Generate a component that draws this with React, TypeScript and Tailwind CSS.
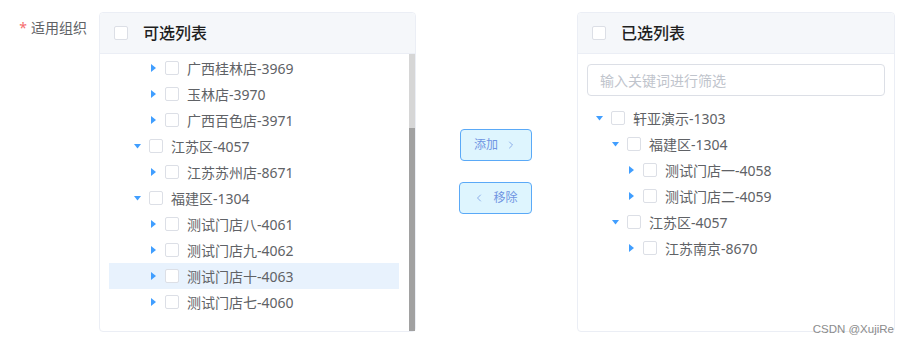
import React from "react";
import { ChevronLeft, ChevronRight } from "lucide-react";

type Node = { label: string; level: number; open?: boolean; active?: boolean };

// only the part of the left tree that is scrolled into view
const leftNodes: Node[] = [
    { label: "广西桂林店-3969", level: 2 },
    { label: "玉林店-3970", level: 2 },
    { label: "广西百色店-3971", level: 2 },
    { label: "江苏区-4057", level: 1, open: true },
    { label: "江苏苏州店-8671", level: 2 },
    { label: "福建区-1304", level: 1, open: true },
    { label: "测试门店八-4061", level: 2 },
    { label: "测试门店九-4062", level: 2 },
    { label: "测试门店十-4063", level: 2, active: true },
    { label: "测试门店七-4060", level: 2 },
];

const rightNodes: Node[] = [
    { label: "轩亚演示-1303", level: 0, open: true },
    { label: "福建区-1304", level: 1, open: true },
    { label: "测试门店一-4058", level: 2 },
    { label: "测试门店二-4059", level: 2 },
    { label: "江苏区-4057", level: 1, open: true },
    { label: "江苏南京-8670", level: 2 },
];

const font = { fontFamily: '"Noto Sans", "Noto Sans CJK SC", sans-serif' };

function Checkbox() {
    return <span className="inline-block w-[14px] h-[14px] shrink-0 rounded-[2px] border border-[#dcdfe6] bg-white" />;
}

function Caret({ open }: { open?: boolean }) {
    return open ? (
        <svg width="7" height="5" viewBox="0 0 7 5">
            <polygon points="0,0 7,0 3.5,4.5" fill="#409eff" />
        </svg>
    ) : (
        <svg width="5" height="8" viewBox="0 0 5 8">
            <polygon points="0,0 5,4 0,8" fill="#409eff" />
        </svg>
    );
}

function TreeRow({ node }: { node: Node }) {
    const pad = node.level === 0 ? "pl-0" : node.level === 1 ? "pl-4" : "pl-8";
    return (
        <div className={`h-[26px] flex items-center ${pad} ${node.active ? "bg-[#e8f2fd]" : ""}`}>
            <span className="w-6 h-[26px] flex items-center justify-center shrink-0">
                <Caret open={node.open} />
            </span>
            <Checkbox />
            <span className="ml-2 text-[14px] text-[#606266] whitespace-nowrap">{node.label}</span>
        </div>
    );
}

function PanelHeader({ title }: { title: string }) {
    return (
        <div className="h-[41px] bg-[#f5f7fa] border-b border-[#ebeef5] flex items-center pl-[14px] rounded-t">
            <Checkbox />
            <span className="ml-[15px] text-[16px] font-medium text-[#1f1f1f]">{title}</span>
        </div>
    );
}

export default function App() {
    return (
        <div className="relative w-[909px] h-[345px] bg-white" style={font}>
            <div className="flex pt-3">
                <div className="w-[99px] pr-3 text-right text-[14px] leading-8 text-[#606266]">
                    <span className="text-[#f56c6c] mr-1">*</span>适用组织
                </div>

                <div className="w-[317px] h-[320px] border border-[#ebeef5] rounded flex flex-col">
                    <PanelHeader title="可选列表" />
                    <div className="relative flex-1 overflow-hidden">
                        <div className="pl-[9px] pr-[16px] pt-[1px]">
                            {leftNodes.map((n) => (
                                <TreeRow key={n.label} node={n} />
                            ))}
                        </div>
                        {/* scrollbar */}
                        <div className="absolute right-0 top-0 bottom-0 w-[6px] bg-[#d6d6d6]">
                            <div className="absolute left-0 right-0 top-[74px] bottom-0 bg-[#a1a1a1]" />
                        </div>
                    </div>
                </div>

                <div className="w-[161px] h-[320px] pb-[2px] flex flex-col items-center justify-center gap-[21px] text-[12px]">
                    <button className="w-[72px] h-8 rounded border border-[#5aa9f7] bg-[#def5fe] text-[#6f94e2] flex items-center justify-center gap-[7px] ml-[-2px]">
                        添加
                        <ChevronRight className="w-3 h-3" strokeWidth={1.5} />
                    </button>
                    <button className="w-[73px] h-8 rounded border border-[#5aa9f7] bg-[#def5fe] text-[#6f94e2] flex items-center justify-center gap-[8px] ml-[-2px]">
                        <ChevronLeft className="w-3 h-3" strokeWidth={1.5} />
                        移除
                    </button>
                </div>

                <div className="w-[318px] h-[320px] border border-[#ebeef5] rounded flex flex-col">
                    <PanelHeader title="已选列表" />
                    <div className="px-[9px] pt-[10px]">
                        <div className="h-8 rounded border border-[#dcdfe6] flex items-center pl-3 text-[14px] text-[#c0c4cc]">
                            输入关键词进行筛选
                        </div>
                        <div className="mt-[9px]">
                            {rightNodes.map((n) => (
                                <TreeRow key={n.label} node={n} />
                            ))}
                        </div>
                    </div>
                </div>
            </div>

            <span
                className="absolute right-[15px] top-[321px] text-[11.5px] text-[#8c8c8c]"
                style={{ fontFamily: '"Liberation Sans", Arial, sans-serif' }}
            >
                CSDN @XujiRe
            </span>
        </div>
    );
}
